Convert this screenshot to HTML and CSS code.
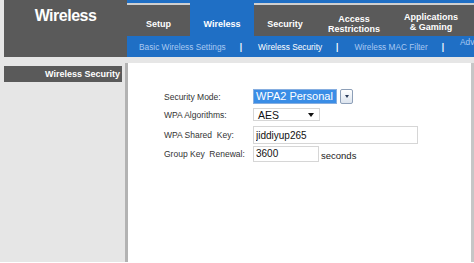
FILE: index.html
```html
<!DOCTYPE html>
<html lang="en">
  <head>
    <meta charset="UTF-8" />
    <title>Wireless Security</title>
    <link rel="stylesheet" href="styles.css">
  </head>
  <body>
    <div class="page">
      <div class="header">
        <div class="brand">Wireless</div>
        <div class="nav">
          <div class="tabs">
            <div class="tab tab-setup">Setup</div>
            <div class="tab tab-wireless active">Wireless</div>
            <div class="tab tab-security">Security</div>
            <div class="tab tab-access">Access<br />Restrictions</div>
            <div class="tab tab-apps">Applications<br />&amp; Gaming</div>
            <div class="tab tab-rest"></div>
          </div>
          <div class="subnav">
            <span class="sub-link">Basic Wireless Settings</span>
            <span class="bar">|</span>
            <span class="sub-link current">Wireless Security</span>
            <span class="bar">|</span>
            <span class="sub-link">Wireless MAC Filter</span>
            <span class="bar">|</span>
            <span class="sub-link sub-more">Adv</span>
          </div>
        </div>
      </div>

      <div class="main">
        <div class="side">
          <div class="side-title">Wireless Security</div>
        </div>
        <div class="content">
          <form class="settings">
            <label class="field-label">Security Mode:</label>
            <div class="combo">
              <span class="combo-value">WPA2 Personal</span>
              <span class="combo-btn"><span class="arrow"></span></span>
            </div>

            <label class="field-label">WPA Algorithms:</label>
            <div class="select-box">
              <span>AES</span>
              <span class="arrow arrow-dark"></span>
            </div>

            <label class="field-label">WPA Shared&nbsp; Key:</label>
            <div>
              <input class="text-input key-input" type="text" value="jiddiyup265" />
            </div>

            <label class="field-label">Group Key&nbsp; Renewal:</label>
            <div class="renewal">
              <input class="text-input short-input" type="text" value="3600" />
              <span class="unit">seconds</span>
            </div>
          </form>
        </div>
      </div>
    </div>
  </body>
</html>
```

FILE: styles.css
```css
body {
  margin: 0;
  font-family: "Liberation Sans", Arial, sans-serif;
  background: #ffffff;
}

.page {
  width: 474px;
  height: 262px;
  display: flex;
  flex-direction: column;
  padding-left: 4px;
  box-sizing: border-box;
  background: #e6e6e6;
}

.header {
  display: flex;
  height: 57px;
}

.brand {
  width: 123px;
  background: #5a5a5a;
  color: #ffffff;
  font-size: 16px;
  font-weight: bold;
  letter-spacing: -0.5px;
  line-height: 18px;
  text-align: center;
  padding-top: 7px;
  box-sizing: border-box;
}

.nav {
  flex: 1;
  display: flex;
  flex-direction: column;
  min-width: 0;
}

.tabs {
  display: flex;
  height: 36px;
  background: #5a5a5a;
  border-top: 3px solid #1f6fc5;
  box-sizing: border-box;
}

.tab {
  display: flex;
  align-items: center;
  justify-content: center;
  border-top: 2px solid #cfcfcf;
  padding-top: 7px;
  box-sizing: border-box;
  color: #ffffff;
  font-size: 9px;
  font-weight: bold;
  line-height: 10px;
  text-align: center;
}

.tab.active {
  background: #1f6fc5;
  border-top-color: #1f6fc5;
}

.tab-setup {
  width: 63px;
}

.tab-wireless {
  width: 64px;
}

.tab-security {
  width: 62px;
}

.tab-access {
  width: 76px;
}

.tab-apps {
  width: 78px;
  padding-top: 3px;
}

.tab-rest {
  flex: 1;
}

.subnav {
  height: 21px;
  display: flex;
  align-items: center;
  padding-left: 12px;
  background: #1f6fc5;
  color: #a9c9f2;
  font-size: 8.3px;
  white-space: nowrap;
  overflow: hidden;
}

.sub-link.current {
  color: #ffffff;
}

.bar {
  margin: 0 16px 0 14px;
  color: #ffffff;
  font-weight: bold;
}

.sub-more {
  align-self: flex-start;
  margin-top: 1px;
}

.main {
  flex: 1;
  display: flex;
}

.side {
  width: 121px;
  padding-top: 9px;
}

.side-title {
  margin-right: 3px;
  padding-right: 2px;
  background: #5a5a5a;
  color: #ffffff;
  font-size: 9px;
  font-weight: bold;
  line-height: 16px;
  text-align: right;
}

.content {
  flex: 1;
  margin-top: 6px;
  padding: 25px 0 0 36px;
  background: #ffffff;
  border-left: 3px solid #b3b3b3;
  border-right: 3px solid #c6c6c6;
}

.settings {
  display: grid;
  grid-template-columns: 89px auto;
  grid-template-rows: 17px 19px 21px 17px;
  align-items: center;
  margin: 0;
}

.field-label {
  font-size: 8.5px;
  color: #333333;
}

.combo {
  display: flex;
  align-items: center;
  gap: 3px;
}

.combo-value {
  width: 80px;
  height: 13px;
  padding-left: 2px;
  background: #3a8de6;
  border: 1px solid #86aee0;
  color: #ffffff;
  font-size: 11px;
  line-height: 13px;
  box-sizing: content-box;
}

.combo-btn {
  width: 11px;
  height: 13px;
  display: flex;
  align-items: center;
  justify-content: center;
  border: 1px solid #8d9fb8;
  border-radius: 2px;
  background: linear-gradient(#ffffff, #dce4ee);
}

.arrow {
  width: 0;
  height: 0;
  border-left: 2.5px solid transparent;
  border-right: 2.5px solid transparent;
  border-top: 3px solid #2d3e5c;
}

.arrow-dark {
  border-left-width: 3px;
  border-right-width: 3px;
  border-top: 4px solid #111111;
}

.select-box {
  width: 67px;
  height: 13px;
  display: flex;
  align-items: center;
  justify-content: space-between;
  padding: 0 5px 0 4px;
  border: 1px solid #d6d6d6;
  box-sizing: border-box;
  color: #111111;
  font-size: 10.5px;
}

.text-input {
  height: 18px;
  margin: 0;
  padding: 0 2px;
  border: 1px solid #d6d6d6;
  box-sizing: border-box;
  font-family: "Liberation Sans", Arial, sans-serif;
  font-size: 10px;
  color: #111111;
  outline: none;
}

.key-input {
  width: 165px;
}

.short-input {
  width: 66px;
  height: 16px;
}

.renewal {
  display: flex;
  align-items: center;
}

.unit {
  margin-left: 2px;
  margin-top: 3px;
  font-size: 9.5px;
  color: #222222;
}
```
